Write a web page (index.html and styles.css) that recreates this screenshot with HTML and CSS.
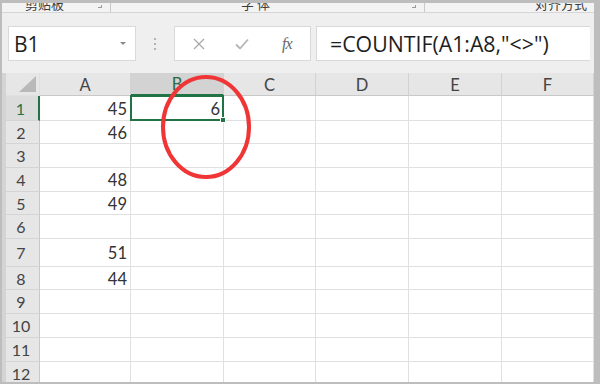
FILE: index.html
```html
<!DOCTYPE html>
<html lang="zh">
<head>
<meta charset="utf-8">
<link rel="stylesheet" href="styles.css">
</head>
<body>
<div class="window">
  <div class="ribbon-tail">
    <div class="grp g1"><span class="lbl">剪贴板</span><span class="launch"></span></div>
    <div class="grp g2"><span class="lbl">字 体</span><span class="launch"></span></div>
    <div class="grp g3"><span class="lbl">对齐方式</span></div>
  </div>
  <div class="fbar">
    <div class="namebox"><span class="ref">B1</span><span class="caret"></span></div>
    <div class="dots"><i></i><i></i><i></i></div>
    <div class="btns">
      <svg class="ico" width="14" height="14" viewBox="0 0 14 14"><path d="M2 2 L12 12 M12 2 L2 12" stroke="#a9a9a9" stroke-width="1.3" fill="none"/></svg>
      <svg class="ico" width="16" height="14" viewBox="0 0 16 14"><path d="M2 7.5 L6 11.5 L14 2.5" stroke="#b5b5b5" stroke-width="1.8" fill="none"/></svg>
      <span class="fx">fx</span>
    </div>
    <div class="formula">=COUNTIF(A1:A8,"&lt;&gt;")</div>
  </div>
  <div class="sheet">
    <div class="grid">
      <div class="corner"><span class="tri"></span></div>
      <div class="ch">A</div><div class="ch sel">B</div><div class="ch">C</div><div class="ch">D</div><div class="ch">E</div><div class="ch">F</div>

      <div class="rh selr">1</div><div class="c">45</div><div class="c active">6<span class="handle"></span></div><div class="c"></div><div class="c"></div><div class="c"></div><div class="c"></div>
      <div class="rh">2</div><div class="c">46</div><div class="c"></div><div class="c"></div><div class="c"></div><div class="c"></div><div class="c"></div>
      <div class="rh">3</div><div class="c"></div><div class="c"></div><div class="c"></div><div class="c"></div><div class="c"></div><div class="c"></div>
      <div class="rh">4</div><div class="c">48</div><div class="c"></div><div class="c"></div><div class="c"></div><div class="c"></div><div class="c"></div>
      <div class="rh">5</div><div class="c">49</div><div class="c"></div><div class="c"></div><div class="c"></div><div class="c"></div><div class="c"></div>
      <div class="rh">6</div><div class="c"></div><div class="c"></div><div class="c"></div><div class="c"></div><div class="c"></div><div class="c"></div>
      <div class="rh">7</div><div class="c">51</div><div class="c"></div><div class="c"></div><div class="c"></div><div class="c"></div><div class="c"></div>
      <div class="rh">8</div><div class="c">44</div><div class="c"></div><div class="c"></div><div class="c"></div><div class="c"></div><div class="c"></div>
      <div class="rh">9</div><div class="c"></div><div class="c"></div><div class="c"></div><div class="c"></div><div class="c"></div><div class="c"></div>
      <div class="rh">10</div><div class="c"></div><div class="c"></div><div class="c"></div><div class="c"></div><div class="c"></div><div class="c"></div>
      <div class="rh">11</div><div class="c"></div><div class="c"></div><div class="c"></div><div class="c"></div><div class="c"></div><div class="c"></div>
      <div class="rh">12</div><div class="c"></div><div class="c"></div><div class="c"></div><div class="c"></div><div class="c"></div><div class="c"></div>
    </div>
    <svg class="mark" width="120" height="120" viewBox="0 0 120 120"><ellipse cx="60" cy="58" rx="43" ry="50" fill="none" stroke="#ef3535" stroke-width="4"/></svg>
  </div>
</div>
</body>
</html>
```
FILE: styles.css
```css
* { box-sizing: border-box; }
html, body { margin: 0; padding: 0; }
body {
  width: 600px;
  height: 384px;
  overflow: hidden;
  background: #bdbdbd;
  font-family: Lato, "Liberation Sans", "Noto Sans CJK SC", sans-serif;
}
.window {
  padding: 3px 6px 2px 2px;
  height: 384px;
  display: flex;
  flex-direction: column;
}
.ribbon-tail {
  height: 10px;
  background: #f3f3f3;
  border-bottom: 1px solid #d6d6d6;
  display: flex;
  overflow: hidden;
  flex: none;
}
.grp {
  display: flex;
  align-items: flex-start;
  border-right: 1px solid #c9c9c9;
  height: 9px;
  position: relative;
}
.g1 { width: 109px; padding-left: 23px; }
.g2 { width: 314px; padding-left: 130px; }
.g3 { flex: 1; border-right: none; padding-left: 110px; }
.lbl {
  font-family: "Noto Sans CJK SC", sans-serif;
  font-size: 13px;
  line-height: 13px;
  margin-top: -6px;
  color: #3c3c3c;
  white-space: nowrap;
}
.launch {
  margin-left: auto;
  margin-right: 8px;
  margin-top: 2px;
  width: 4px;
  height: 3px;
  border-right: 1px solid #9a9a9a;
  border-bottom: 1px solid #9a9a9a;
}
.fbar {
  height: 60px;
  flex: none;
  background: #efefef;
  display: flex;
  align-items: flex-start;
  padding: 13px 4px 0 6px;
}
.namebox {
  width: 128px;
  height: 35px;
  background: #fff;
  border: 1px solid #d9d9d9;
  display: flex;
  align-items: center;
  padding-left: 5px;
  padding-right: 9px;
}
.ref {
  font-family: "Open Sans", sans-serif;
  font-size: 21px;
  color: #1e1e1e;
}
.caret {
  margin-left: auto;
  width: 0; height: 0;
  border-left: 3px solid transparent;
  border-right: 3px solid transparent;
  border-top: 3px solid #8a8a8a;
}
.dots {
  width: 38px;
  height: 35px;
  display: flex;
  flex-direction: column;
  align-items: center;
  justify-content: center;
  gap: 3px;
}
.dots i {
  display: block;
  width: 2px; height: 2px;
  background: #b3b3b3;
}
.btns {
  width: 137px;
  height: 35px;
  background: #fff;
  border: 1px solid #d9d9d9;
  display: flex;
  align-items: center;
  padding-left: 17px;
}
.btns .ico { flex: none; }
.btns .ico + .ico { margin-left: 28px; }
.fx {
  margin-left: 32px;
  font-family: "Liberation Serif", serif;
  font-style: italic;
  font-size: 16px;
  color: #666;
  letter-spacing: -1px;
}
.formula {
  flex: 1;
  margin-left: 5px;
  height: 35px;
  background: #fff;
  border: 1px solid #d9d9d9;
  border-right: none;
  padding-left: 13px;
  font-family: "Open Sans", sans-serif;
  font-size: 21.3px;
  line-height: 33px;
  color: #1e1e1e;
  letter-spacing: 0;
  white-space: nowrap;
}
.sheet {
  position: relative;
  flex: 1;
  overflow: hidden;
  background: #d4d4d4;
  padding-left: 4px;
}
.grid {
  display: grid;
  grid-template-columns: 34px 91px 93px 92px 93px 93px 92px;
  grid-template-rows: 23px 25px 23px 24px 24px 23px 24px 28px 23px 24px 24px 24px 24px;
  background: #fff;
}
.grid > div {
  border-right: 1px solid #e0e0e0;
  border-bottom: 1px solid #e0e0e0;
}
.corner {
  background: #e6e6e6;
  position: relative;
  display: flex;
  justify-content: flex-end;
  align-items: flex-end;
  padding: 0 3px 3px 0;
}
.tri {
  width: 0; height: 0;
  border-left: 17px solid transparent;
  border-bottom: 16px solid #b9b9b9;
}
.grid > .ch {
  background: #e6e6e6;
  border-right-color: #d2d2d2;
  border-bottom-color: #c8c8c8;
  font-family: Lato, sans-serif;
  font-size: 16.5px;
  color: #444;
  display: flex;
  align-items: center;
  justify-content: center;
  padding-top: 1px;
}
.grid > .ch.sel {
  background: #d3d3d3;
  color: #2b6a44;
  border-bottom: 2px solid #217346;
}
.grid > .rh {
  background: #e6e6e6;
  border-right-color: #c8c8c8;
  border-bottom-color: #d4d4d4;
  font-family: Lato, sans-serif;
  font-size: 16px;
  color: #444;
  display: flex;
  align-items: center;
  justify-content: center;
  padding-right: 3px;
}
.grid > .rh.selr {
  background: #dcdcdc;
  color: #217346;
  border-right: 2px solid #217346;
}
.c {
  font-family: Lato, sans-serif;
  font-size: 16.5px;
  color: #333;
  display: flex;
  align-items: center;
  justify-content: flex-end;
  padding-right: 3px;
  padding-top: 1px;
}
.grid > .c.active {
  position: relative;
  border: 2px solid #217346;
  margin: -1px 0 0 -1px;
  padding-right: 2px;
}
.handle {
  position: absolute;
  right: -4px;
  bottom: -4px;
  width: 6px;
  height: 6px;
  background: #217346;
  border: 1px solid #fff;
}
.mark {
  position: absolute;
  left: 144px;
  top: -4px;
}
```
